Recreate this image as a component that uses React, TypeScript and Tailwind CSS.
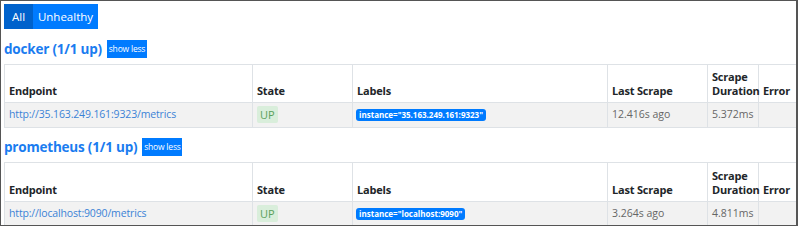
import React from "react";

type Target = {
  endpoint: string;
  instance: string;
  lastScrape: string;
  duration: string;
};

type Pool = {
  name: string;
  targets: Target[];
};

const POOLS: Pool[] = [
  {
    name: "docker",
    targets: [
      {
        endpoint: "http://35.163.249.161:9323/metrics",
        instance: "35.163.249.161:9323",
        lastScrape: "12.416s ago",
        duration: "5.372ms",
      },
    ],
  },
  {
    name: "prometheus",
    targets: [
      {
        endpoint: "http://localhost:9090/metrics",
        instance: "localhost:9090",
        lastScrape: "3.264s ago",
        duration: "4.811ms",
      },
    ],
  },
];

const FONT = { fontFamily: "'Open Sans', 'Noto Sans', sans-serif" };

function PoolTable({ pool, first }: { pool: Pool; first: boolean }) {
  const up = pool.targets.length;
  return (
    <div className={first ? "mt-[11px]" : "mt-[10px]"}>
      <div className="flex h-[18px] items-center gap-[5px]">
        <h2 className="text-[13.5px] font-bold leading-[18px] tracking-[-0.2px] text-[#1a7cf0]">
          {pool.name} ({up}/{up} up)
        </h2>
        <button className="h-[18px] w-[40px] bg-[#007bff] text-center text-[8.5px] leading-[18px] tracking-[-0.2px] text-white">show less</button>
      </div>
      <table className="mt-[6px] w-[793px] table-fixed border-collapse text-[10.5px]">
        <colgroup>
          <col className="w-[248px]" />
          <col className="w-[100px]" />
          <col className="w-[255px]" />
          <col className="w-[100px]" />
          <col className="w-[51px]" />
          <col />
        </colgroup>
        <thead>
          <tr className={first ? "h-[38px]" : "h-[39px]"}>
            {["Endpoint", "State", "Labels", "Last Scrape", "Scrape Duration", "Error"].map((h) => (
              <th
                key={h}
                className="border border-[#dee2e6] px-[4px] pb-[4px] text-left align-bottom text-[11px] font-bold leading-[14px] tracking-[-0.2px] text-[#212529]"
              >
                {h}
              </th>
            ))}
          </tr>
        </thead>
        <tbody>
          {pool.targets.map((t) => (
            <tr key={t.endpoint} className="h-[25px] bg-[#f2f2f2] text-[#666]">
              <td className="border border-[#dee2e6] px-[4px]">
                <a className="tracking-[-0.15px] text-[#3b82d6]">{t.endpoint}</a>
              </td>
              <td className="border border-[#dee2e6] px-[4px]">
                <span className="inline-block h-[17px] rounded-[2px] bg-[#d9eedb] px-[3px] text-[11px] leading-[17px] text-[#5ba05b]">UP</span>
              </td>
              <td className="border border-[#dee2e6] px-[3px]">
                <span className="inline-block h-[12px] rounded-[3px] bg-[#007bff] px-[3px] text-[8px] font-bold leading-[12px] text-white">
                  instance="{t.instance}"
                </span>
              </td>
              <td className="border border-[#dee2e6] px-[4px]">{t.lastScrape}</td>
              <td className="border border-[#dee2e6] px-[4px]">{t.duration}</td>
              <td className="border border-[#dee2e6] px-[4px]"></td>
            </tr>
          ))}
        </tbody>
      </table>
    </div>
  );
}

export default function App() {
  return (
    <div style={FONT} className="h-[227px] w-[800px] bg-white">
      <div className="h-[226px] w-[798px] overflow-hidden border border-r-2 border-[#555] pl-[3px] pt-[3px]">
        <div className="flex h-[25px] text-[11.5px] text-white">
          <button className="w-[29px] bg-[#0062cc] text-center">All</button>
          <button className="w-[65px] bg-[#007bff] text-center">Unhealthy</button>
        </div>
        {POOLS.map((p, i) => (
          <PoolTable key={p.name} pool={p} first={i === 0} />
        ))}
      </div>
    </div>
  );
}
